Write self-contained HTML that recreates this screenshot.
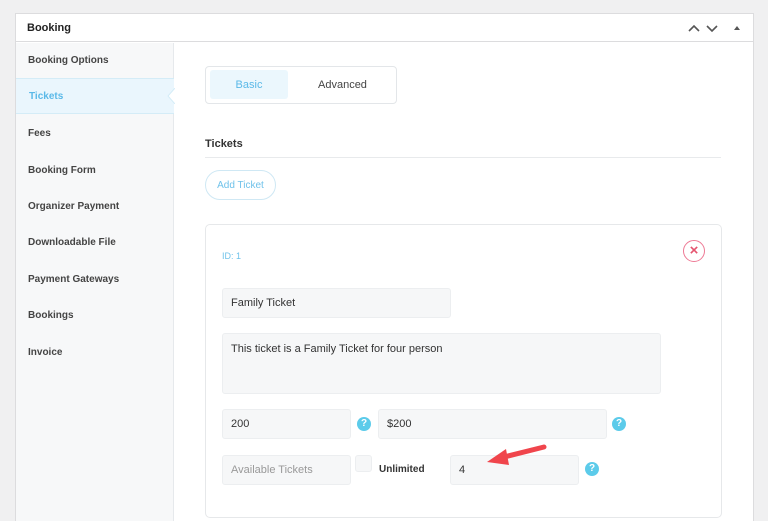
<!DOCTYPE html>
<html><head><style>
*{box-sizing:border-box;margin:0;padding:0}
html,body{width:768px;height:521px;overflow:hidden}
body{background:#f0f0f1;font-family:"Liberation Sans",sans-serif;position:relative;font-size:11px;color:#3c434a}
.abs{position:absolute}
.box{left:15px;top:13px;width:739px;height:510px;background:#fff;border:1px solid #dcdcde}
.hdr{left:16px;top:14px;width:737px;height:28px;border-bottom:1px solid #dcdcde;background:#fff}
.side{left:16px;top:43px;width:158px;height:478px;background:#f7f8f9;border-right:1px solid #e6e9ec}
.it{position:absolute;left:12px;font-weight:bold;font-size:10px;color:#444}
.inp{position:absolute;background:#f6f7f8;border:1px solid #eceef0;border-radius:3px;font-size:11px;color:#333;padding-left:8px;display:flex;align-items:center}
.q{position:absolute;width:14px;height:14px;border-radius:50%;background:#5ccbea;color:#fff;font-size:10px;font-weight:bold;text-align:center;line-height:14px}
</style></head><body>
<div class="abs box"></div>
<div class="abs hdr"><div style="position:absolute;left:11px;top:8px;font-weight:bold;font-size:11px;color:#222">Booking</div>
<svg style="position:absolute;left:670px;top:8px" width="70" height="12"><path d="M3 9 L8 4 L13 9" stroke="#555" stroke-width="1.6" fill="none"/><path d="M21 4 L26 9 L31 4" stroke="#555" stroke-width="1.6" fill="none"/><path d="M48 8 L51 4 L54 8Z" fill="#555"/></svg></div>
<div class="abs side">
<div class="it" style="top:12px">Booking Options</div>
<div style="position:absolute;left:0;top:35px;width:158px;height:36px;background:#eaf6fd;border-top:1px solid #d4ecf7;border-bottom:1px solid #d4ecf7"></div>
<div class="it" style="top:48px;left:13px;color:#5ab9e8">Tickets</div>
<div class="it" style="top:85px">Fees</div>
<div class="it" style="top:122px">Booking Form</div>
<div class="it" style="top:158px">Organizer Payment</div>
<div class="it" style="top:194px">Downloadable File</div>
<div class="it" style="top:231px">Payment Gateways</div>
<div class="it" style="top:267px">Bookings</div>
<div class="it" style="top:304px">Invoice</div>
</div>
<svg class="abs" style="left:167px;top:88px" width="8" height="16"><path d="M8 0 L1 8 L8 16" fill="#fff" stroke="#d4ecf7"/></svg>
<div class="abs" style="left:205px;top:66px;width:192px;height:38px;border:1px solid #e3e6e9;border-radius:4px"></div>
<div class="abs" style="left:210px;top:70px;width:78px;height:29px;background:#ebf7fd;border-radius:3px;color:#5ab9e8;font-size:11px;text-align:center;line-height:30px">Basic</div>
<div class="abs" style="left:318px;top:79px;font-size:11px;color:#444">Advanced</div>
<div class="abs" style="left:205px;top:138px;font-weight:bold;font-size:11px;color:#333">Tickets</div>
<div class="abs" style="left:205px;top:157px;width:516px;height:1px;background:#e8eaec"></div>
<div class="abs" style="left:205px;top:170px;width:71px;height:30px;border:1px solid #cfe8f4;border-radius:15px;color:#6fc2ea;font-size:10px;text-align:center;line-height:29px">Add Ticket</div>
<div class="abs" style="left:205px;top:224px;width:517px;height:294px;border:1px solid #e6e8ea;border-radius:5px"></div>
<div class="abs" style="left:222px;top:251px;font-size:9px;color:#6fc2ea">ID: 1</div>
<div class="abs" style="left:683px;top:240px;width:22px;height:22px;border:1.5px solid #ee7a95;border-radius:50%;color:#e5546f;text-align:center;line-height:19px;font-size:15px;font-weight:bold">×</div>
<div class="inp" style="left:222px;top:288px;width:229px;height:30px">Family Ticket</div>
<div class="inp" style="left:222px;top:333px;width:439px;height:61px;align-items:flex-start;padding-top:9px">This ticket is a Family Ticket for four person</div>
<div class="inp" style="left:222px;top:409px;width:129px;height:30px">200</div>
<div class="q" style="left:357px;top:417px">?</div>
<div class="inp" style="left:378px;top:409px;width:229px;height:30px">$200</div>
<div class="q" style="left:612px;top:417px">?</div>
<div class="inp" style="left:222px;top:455px;width:129px;height:30px;color:#999">Available Tickets</div>
<div class="inp" style="left:355px;top:455px;width:17px;height:17px;padding:0"></div>
<div class="abs" style="left:379px;top:464px;font-weight:bold;font-size:10px;color:#333">Unlimited</div>
<div class="inp" style="left:450px;top:455px;width:129px;height:30px">4</div>
<div class="q" style="left:585px;top:462px">?</div>
<svg class="abs" style="left:480px;top:440px" width="70" height="30"><path d="M64 7 L24 17" stroke="#f0454c" stroke-width="5" stroke-linecap="round"/><path d="M7 22 L26 9 L29 25 Z" fill="#f0454c"/></svg>
</body></html>
